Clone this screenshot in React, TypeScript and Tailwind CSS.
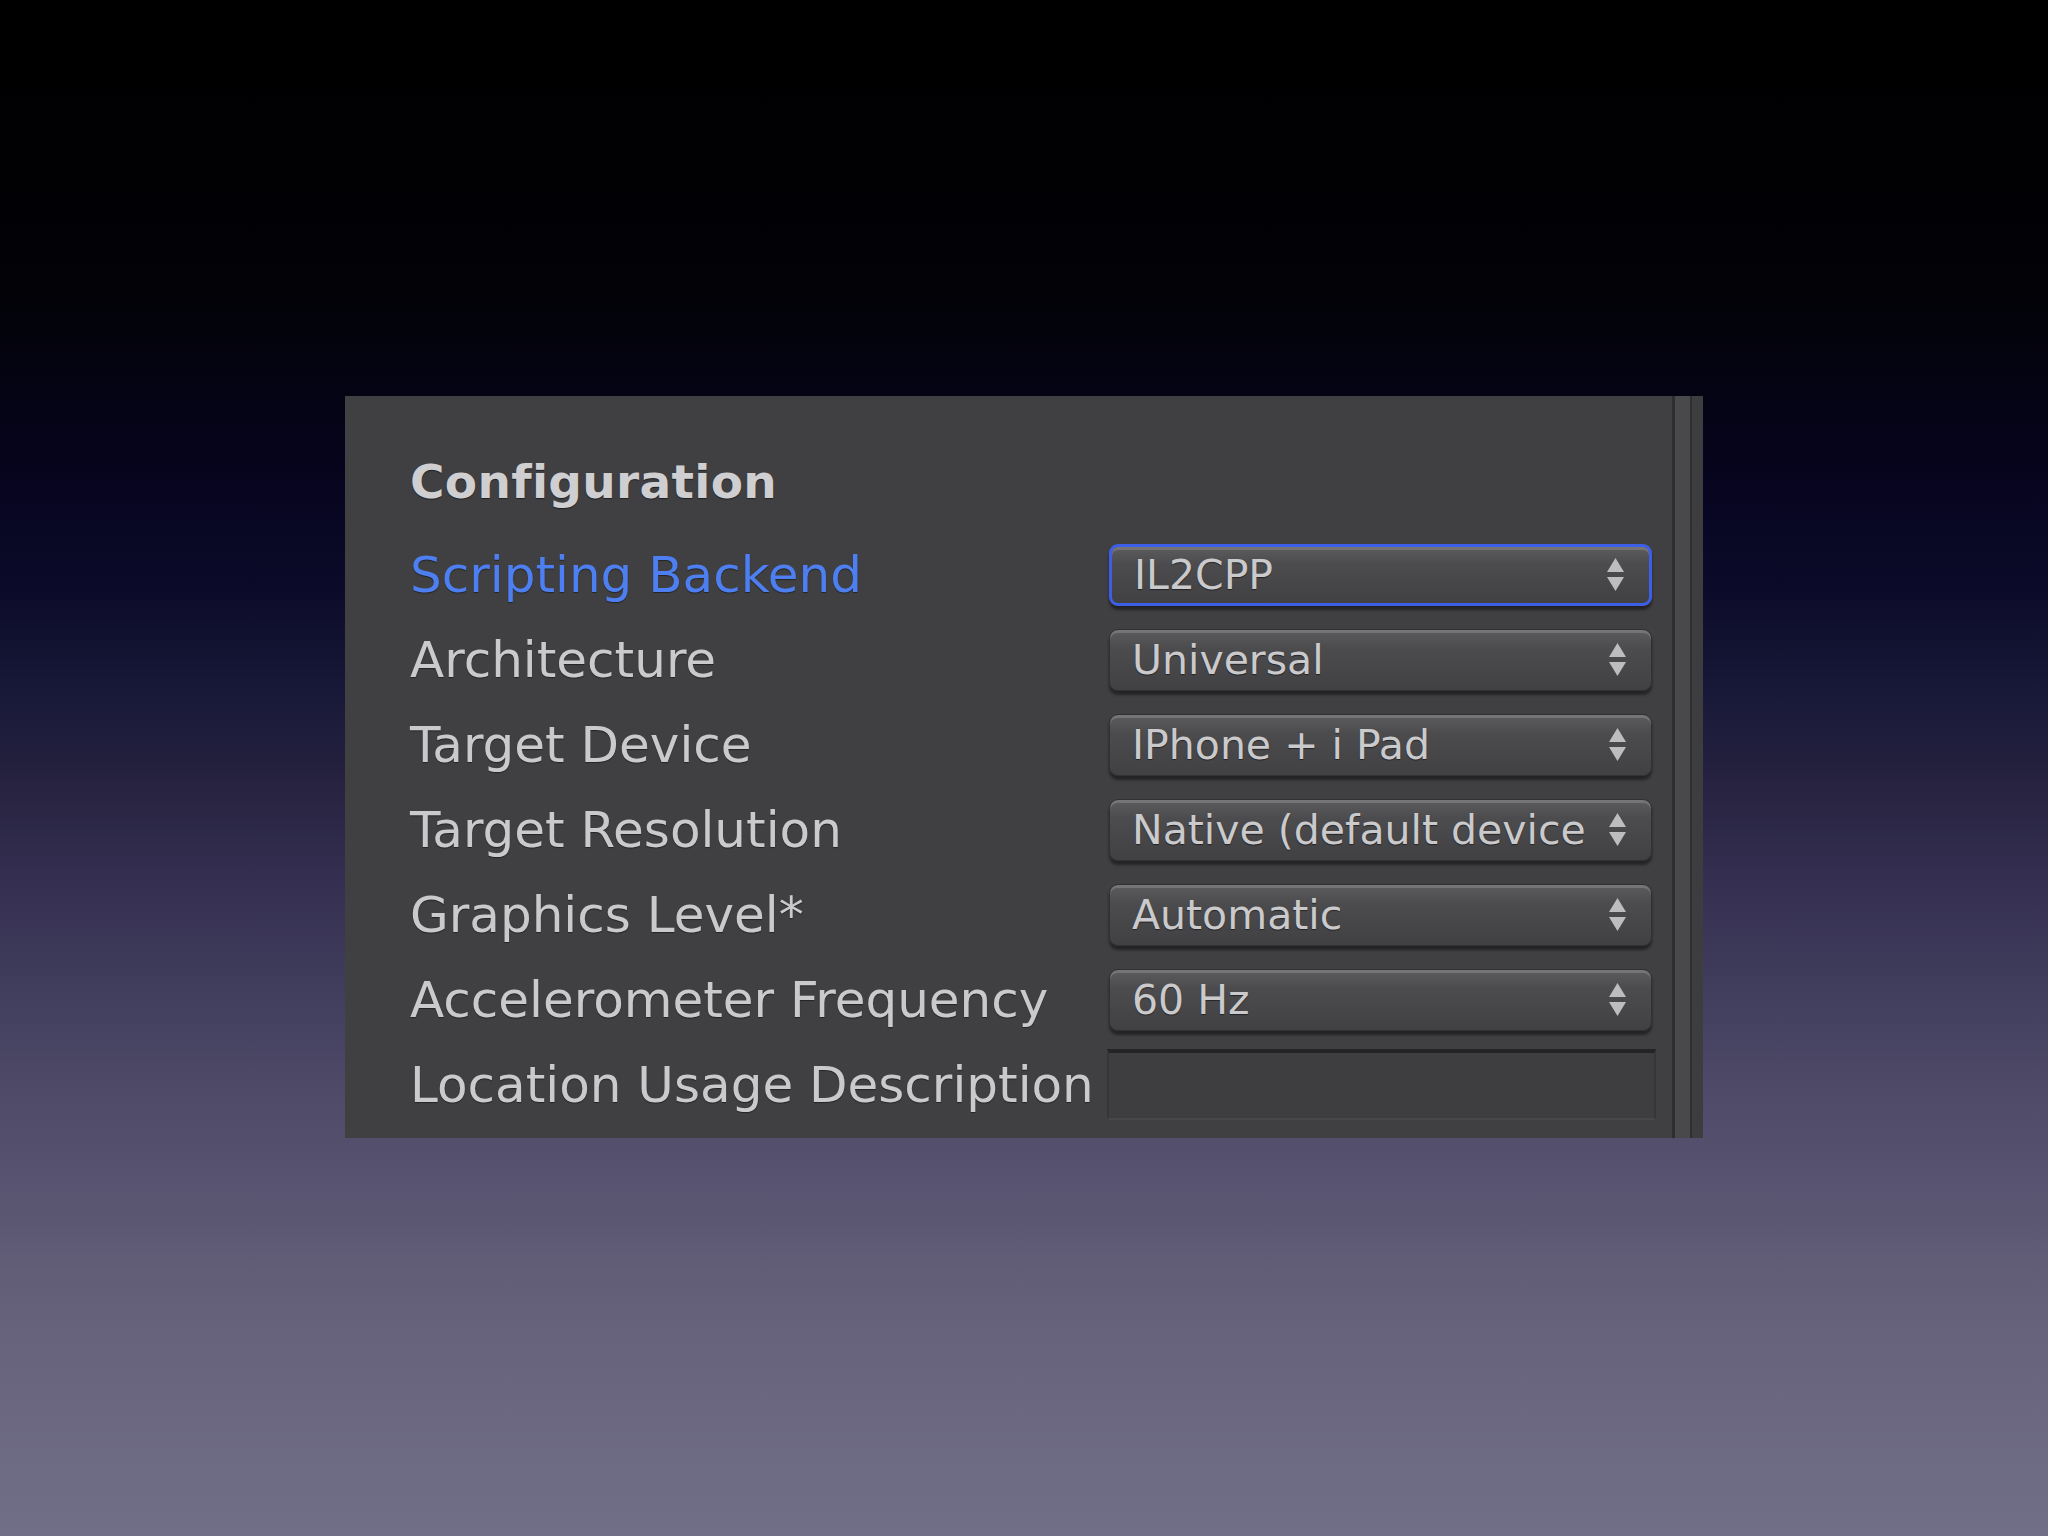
import React from 'react';

interface Row {
  label: string;
  value?: string;
  active?: boolean;
}

const rows: Row[] = [
  { label: 'Scripting Backend', value: 'IL2CPP', active: true },
  { label: 'Architecture', value: 'Universal' },
  { label: 'Target Device', value: 'IPhone + i Pad' },
  { label: 'Target Resolution', value: 'Native (default device' },
  { label: 'Graphics Level*', value: 'Automatic' },
  { label: 'Accelerometer Frequency', value: '60 Hz' },
  { label: 'Location Usage Description' },
];

// Up/down stepper glyph at the right end of each popup
const Arrows = () => (
  <svg width="19" height="36" viewBox="0 0 19 36" className="shrink-0">
    <path d="M9.5 1 L18 15 L1 15 Z" fill="#bdbcbe" />
    <path d="M1 20 L18 20 L9.5 34 Z" fill="#bdbcbe" />
  </svg>
);

const Popup: React.FC<{ value: string; active?: boolean }> = ({ value, active }) => (
  <div
    className={`ml-[2px] w-[543px] h-[62px] rounded-[9px] flex items-center pl-[22px] pr-[24px] gap-2 bg-[linear-gradient(180deg,#5c5b5e_0%,#4c4b4e_30%,#414043_100%)] shadow-[inset_0_3px_0_rgba(255,255,255,0.16),0_4px_3px_rgba(0,0,0,0.45)] ${
      active ? 'border-[3px] border-[#3d5fe8]' : 'border border-[#313033]'
    }`}
  >
    <span className="flex-1 overflow-hidden whitespace-nowrap text-[41px] leading-[52px] text-[#cac9cb] [text-shadow:0_1px_1px_rgba(0,0,0,0.5)]">
      {value}
    </span>
    <Arrows />
  </div>
);

export default function App() {
  return (
    <div className="w-[2048px] h-[1536px] pt-[396px] pl-[345px] font-['DejaVu_Sans',sans-serif] bg-[linear-gradient(180deg,#000000_0%,#020207_19%,#070520_32%,#0b0a28_38%,#181838_45%,#26223f_51%,#342f50_57%,#403c5c_64%,#4c4866_70%,#575370_77%,#625e78_83%,#69657f_89%,#716e88_100%)]">
      <div className="w-[1358px] h-[742px] bg-[#403f42] flex">
        <div className="flex-1 pl-[65px] pt-[58px]">
          <h2 className="text-[47px] leading-[55px] font-bold tracking-[0.3px] text-[#cfced0] [text-shadow:0_1px_1px_rgba(0,0,0,0.5)]">
            Configuration
          </h2>
          <div className="mt-[23px] flex flex-col">
            {rows.map(row => (
              <div key={row.label} className="h-[85px] flex items-center">
                <div
                  className={`w-[697px] shrink-0 whitespace-nowrap text-[50px] leading-[58px] [text-shadow:0_1px_1px_rgba(0,0,0,0.45)] ${
                    row.active ? 'text-[#4d7ff0]' : 'text-[#cac9cb]'
                  }`}
                >
                  {row.label}
                </div>
                {row.value ? (
                  <Popup value={row.value} active={row.active} />
                ) : (
                  <div className="w-[549px] h-[71px] bg-[#3e3d40] border-t-[4px] border-t-[#242326] border-x-2 border-x-[#363538] border-b-2 border-b-[#48474a]" />
                )}
              </div>
            ))}
          </div>
        </div>
        {/* scrollbar gutter */}
        <div className="w-[31px] flex">
          <div className="w-[3px] bg-[#2e2d30]" />
          <div className="w-[15px] bg-[#49484b]" />
          <div className="w-[2px] bg-[#2f2e31]" />
          <div className="flex-1 bg-[#3d3c3f]" />
        </div>
      </div>
    </div>
  );
}
